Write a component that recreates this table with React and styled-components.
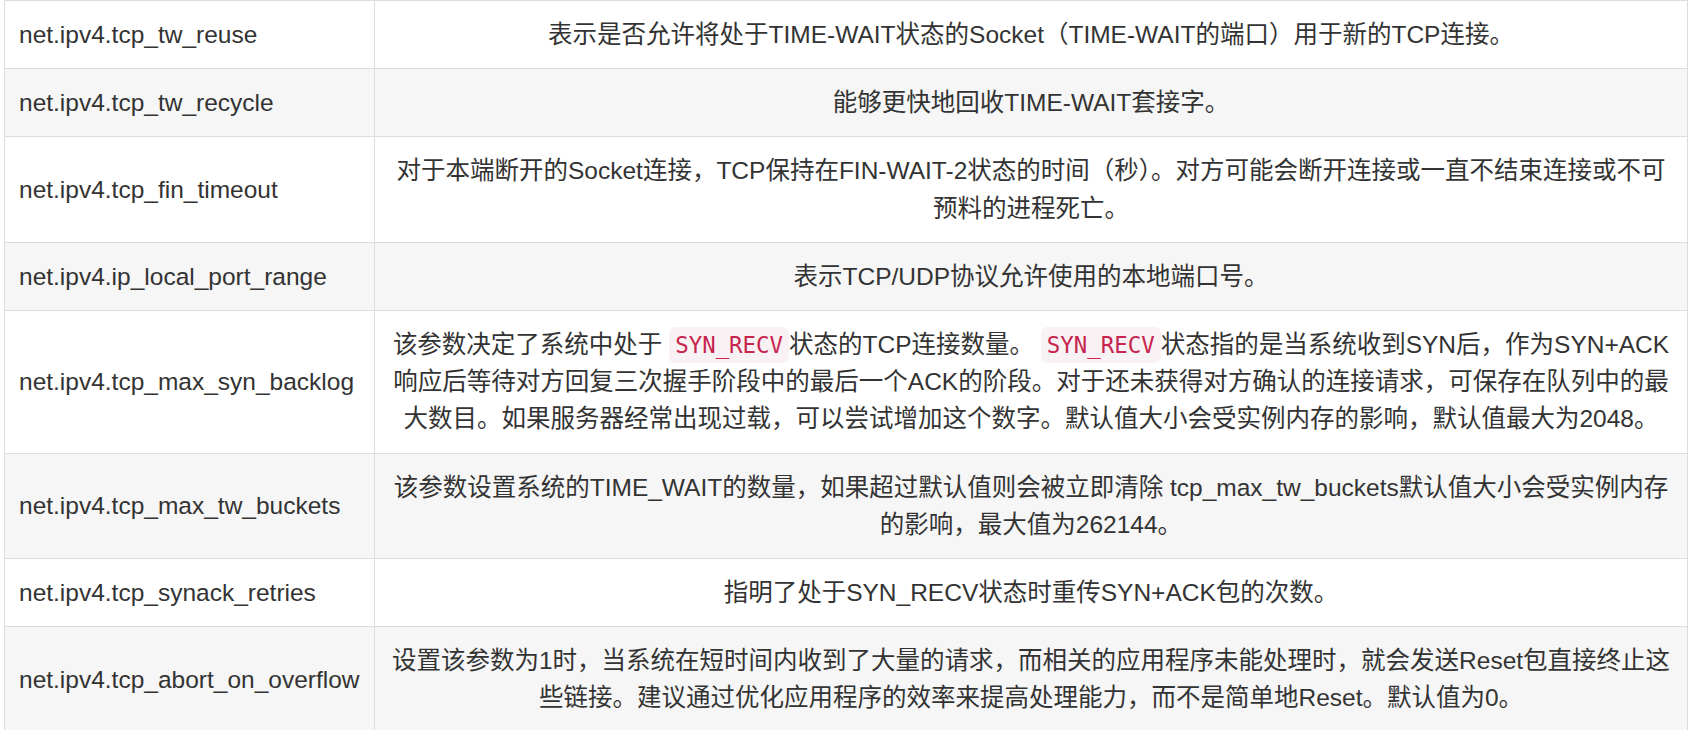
import React from "react";
import styled, { createGlobalStyle } from "styled-components";

const Global = createGlobalStyle`
  html, body { margin: 0; padding: 0; background: #fff; }
  body {
    font-family: "Liberation Sans", Arial, "Noto Sans CJK SC", sans-serif;
    color: #333;
  }
`;

const Page = styled.div`
  padding: 0 9px 0 4px;
`;

const Table = styled.table`
  width: 1684px;
  border-collapse: collapse;
  border-spacing: 0;
  table-layout: fixed;
  font-size: 24.5px;
  line-height: 37.2px;
  color: #333;
`;

const Row = styled.tr`
  background: ${(p) => (p.$striped ? "#f6f6f6" : "#fff")};
`;

const Cell = styled.td`
  border: 1px solid #dddddd;
  padding: 15px 14px;
  vertical-align: middle;
  text-align: ${(p) => (p.$center ? "center" : "left")};
`;

const Code = styled.code`
  font-family: "DejaVu Sans Mono", "Liberation Mono", monospace;
  font-size: 22.4px;
  line-height: 1;
  color: #c7254e;
  background: #f9f2f4;
  border-radius: 6px;
  padding: 5px 6px;
`;

const rows = [
  ["net.ipv4.tcp_tw_reuse", "表示是否允许将处于TIME-WAIT状态的Socket（TIME-WAIT的端口）用于新的TCP连接。"],
  ["net.ipv4.tcp_tw_recycle", "能够更快地回收TIME-WAIT套接字。"],
  ["net.ipv4.tcp_fin_timeout", "对于本端断开的Socket连接，TCP保持在FIN-WAIT-2状态的时间（秒）。对方可能会断开连接或一直不结束连接或不可预料的进程死亡。"],
  ["net.ipv4.ip_local_port_range", "表示TCP/UDP协议允许使用的本地端口号。"],
  [
    "net.ipv4.tcp_max_syn_backlog",
    <>
      该参数决定了系统中处于 <Code>SYN_RECV</Code>状态的TCP连接数量。 <Code>SYN_RECV</Code>状态指的是当系统收到SYN后，作为SYN+ACK响应后等待对方回复三次握手阶段中的最后一个ACK的阶段。对于还未获得对方确认的连接请求，可保存在队列中的最大数目。如果服务器经常出现过载，可以尝试增加这个数字。默认值大小会受实例内存的影响，默认值最大为2048。
    </>,
  ],
  ["net.ipv4.tcp_max_tw_buckets", "该参数设置系统的TIME_WAIT的数量，如果超过默认值则会被立即清除 tcp_max_tw_buckets默认值大小会受实例内存的影响，最大值为262144。"],
  ["net.ipv4.tcp_synack_retries", "指明了处于SYN_RECV状态时重传SYN+ACK包的次数。"],
  ["net.ipv4.tcp_abort_on_overflow", "设置该参数为1时，当系统在短时间内收到了大量的请求，而相关的应用程序未能处理时，就会发送Reset包直接终止这些链接。建议通过优化应用程序的效率来提高处理能力，而不是简单地Reset。默认值为0。"],
];

export default function App() {
  return (
    <Page>
      <Global />
      <Table>
        <colgroup>
          <col style={{ width: "370px" }} />
          <col />
        </colgroup>
        <tbody>
          {rows.map(([k, v], i) => (
            <Row key={k} $striped={i % 2 === 1}>
              <Cell>{k}</Cell>
              <Cell $center>{v}</Cell>
            </Row>
          ))}
        </tbody>
      </Table>
    </Page>
  );
}
